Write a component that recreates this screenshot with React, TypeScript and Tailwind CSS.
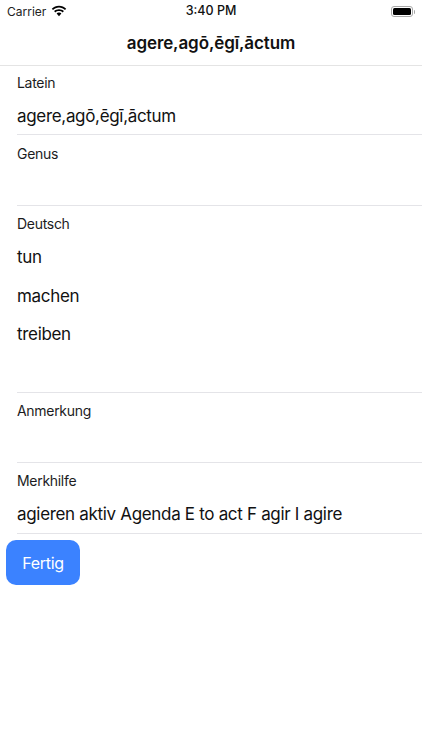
import React from 'react';

const inter = "font-['Inter',sans-serif]";

const Field = ({ label, lines, height, top = 'pt-[9px]' }: { label: string; lines: string[]; height: string; top?: string }) => (
  <div className={`ml-[17px] border-b border-[#e4e4e8] ${height}`}>
    <div className={`${top} text-[14px] leading-[17px] tracking-[-0.3px] text-[#1c1c1e]`}>{label}</div>
    <div className="mt-[13px] flex flex-col gap-[14.7px]">
      {lines.map(line => (
        <div key={line} className="text-[17px] leading-[24px] tracking-[-0.32px] text-[#111]">{line}</div>
      ))}
    </div>
  </div>
);

const App: React.FC = () => (
  <div className={`h-[750px] w-[422px] overflow-hidden bg-white ${inter}`}>
    {/* Statusleiste */}
    <div className="flex h-[22px] items-center justify-between pl-[7px] pr-[7px] pt-[1px]">
      <div className="flex w-[120px] items-center gap-[5px]">
        <span className="text-[12px] text-[#222]">Carrier</span>
        <svg width="16" height="12" viewBox="0 0 16 12" fill="#000" className="mb-[2px]">
          <path d="M8 2.6c2.3 0 4.4.9 6 2.4l1.2-1.3C13.3 1.9 10.8.8 8 .8S2.700 1.900.8 3.700L2 5c1.600-1.500 3.700-2.400 6-2.400z" />
          <path d="M8 6c1.400 0 2.700.5 3.700 1.400l1.200-1.300C11.600 4.900 9.900 4.200 8 4.200s-3.600.7-4.900 1.900l1.200 1.300C5.300 6.500 6.600 6 8 6z" />
          <path d="M8 7.600c-1 0-1.800.4-2.400.9L8 11.200l2.400-2.700c-.6-.5-1.400-.9-2.400-.9z" />
        </svg>
      </div>
      <span className="text-[12.5px] font-medium text-[#111]">3:40 PM</span>
      <div className="flex w-[120px] items-center justify-end">
        <div className="flex h-[11px] w-[22px] items-center rounded-[3px] border border-[#a8a8a8] p-[1px]">
          <div className="h-full w-full rounded-[1.5px] bg-black" />
        </div>
        <div className="ml-[1px] h-[4px] w-[1px] rounded-r bg-[#a8a8a8]" />
      </div>
    </div>

    {/* Titelleiste */}
    <div className="flex h-[44px] items-center justify-center border-b border-[#e4e4e4] text-[17px] font-semibold tracking-[-0.1px] text-[#111]">
      agere,agō,ēgī,āctum
    </div>

    <Field label="Latein" lines={['agere,agō,ēgī,āctum']} height="h-[69px]" top="pt-[8px]" />
    <Field label="Genus" lines={[]} height="h-[71px]" top="pt-[10px]" />
    <Field label="Deutsch" lines={['tun', 'machen', 'treiben']} height="h-[187px]" />
    <Field label="Anmerkung" lines={[]} height="h-[70px]" />
    <Field label="Merkhilfe" lines={['agieren aktiv Agenda E to act F agir I agire']} height="h-[71px]" />

    <button className="ml-[6px] mt-[6px] flex h-[45px] w-[74px] items-center justify-center rounded-[10px] bg-[#3b82ff] text-[16px] tracking-[-0.3px] text-white">
      Fertig
    </button>
  </div>
);

export default App;
